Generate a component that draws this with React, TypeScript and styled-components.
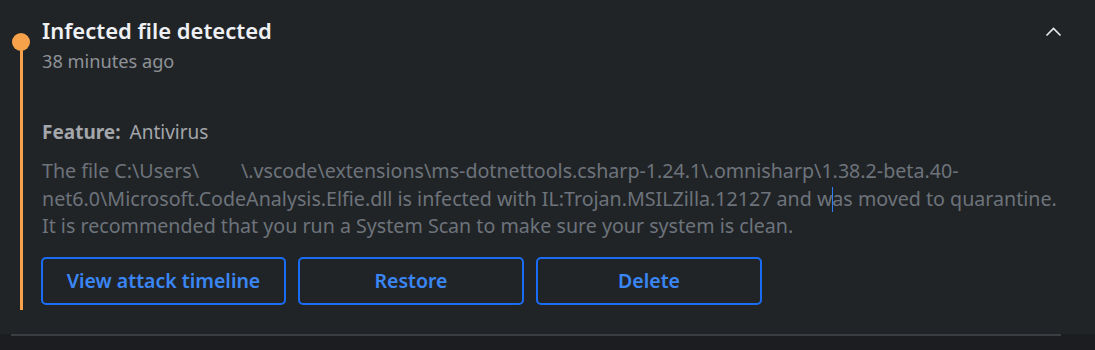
import styled, { createGlobalStyle } from "styled-components";

const GlobalStyle = createGlobalStyle`
    body {
        margin: 0;
        background: #1b1d20;
        font-family: "Noto Sans", "Open Sans", sans-serif;
    }
`;

const Page = styled.div`
    width: 1095px;
    height: 350px;
    background: #1b1d20;
`;

const Card = styled.div`
    display: flex;
    height: 334px;
    background: #212427;
    box-sizing: border-box;
    padding-right: 34px;
`;

const Rail = styled.div`
    width: 40px;
    margin-left: 1px;
    padding-top: 33px;
    display: flex;
    flex-direction: column;
    align-items: center;
`;

const Dot = styled.div`
    width: 18px;
    height: 18px;
    border-radius: 50%;
    background: #f5a24b;
    flex-shrink: 0;
`;

const RailLine = styled.div`
    width: 3px;
    height: 260px;
    margin-top: -1px;
    background: #f5a24b;
`;

const Content = styled.div`
    flex: 1;
    padding-top: 15px;
    padding-left: 1px;
`;

const Header = styled.div`
    display: flex;
    justify-content: space-between;
    align-items: flex-start;
`;

const Title = styled.div`
    font-size: 22px;
    font-weight: 600;
    line-height: 30px;
    color: #eef0f3;
`;

const Subtitle = styled.div`
    font-size: 18.2px;
    line-height: 24px;
    color: #8f9297;
    margin-top: 4px;
`;

const Chevron = styled.svg`
    margin-top: 12px;
    margin-right: -1px;
`;

const Feature = styled.div`
    margin-top: 46px;
    font-size: 19px;
    line-height: 26px;
    color: #a3a6aa;
    b {
        font-weight: 700;
        margin-right: 9px;
    }
`;

const Body = styled.div`
    margin-top: 12px;
    font-size: 19.65px;
    line-height: 27.5px;
    color: #6d737b;
    span.line {
        display: block;
        white-space: nowrap;
    }
`;

const Redacted = styled.span`
    display: inline-block;
    width: 42px;
`;

const Caret = styled.span`
    display: inline-block;
    width: 1px;
    height: 25px;
    margin: 0 -1px 0 0;
    background: #2f7cf6;
    vertical-align: -6px;
`;

const Actions = styled.div`
    display: flex;
    gap: 12px;
    margin-top: 17px;
    margin-left: -1px;
`;

const Button = styled.button<{ $wide?: boolean }>`
    width: ${(p) => (p.$wide ? "245px" : "226px")};
    height: 48px;
    padding: 0;
    background: transparent;
    border: 2px solid #1a6cf2;
    border-radius: 5px;
    color: #3a86f4;
    font-family: "Noto Sans", "Open Sans", sans-serif;
    font-size: 19.5px;
    font-weight: 600;
    cursor: pointer;
`;

const Divider = styled.div`
    height: 2px;
    margin-left: 11px;
    width: 1050px;
    background: #3a3d41;
`;

export default function App() {
    return (
        <Page>
            <GlobalStyle />
            <Card>
                <Rail>
                    <Dot />
                    <RailLine />
                </Rail>
                <Content>
                    <Header>
                        <div>
                            <Title>Infected file detected</Title>
                            <Subtitle>38 minutes ago</Subtitle>
                        </div>
                        <Chevron width="17" height="10" viewBox="0 0 17 10">
                            <path
                                d="M1.5 8.5 L8.5 1.5 L15.5 8.5"
                                fill="none"
                                stroke="#e8eaed"
                                strokeWidth="1.6"
                            />
                        </Chevron>
                    </Header>
                    <Feature>
                        <b>Feature:</b>Antivirus
                    </Feature>
                    <Body>
                        <span className="line">
                            The file C:\Users\<Redacted />
                            \.vscode\extensions\ms-dotnettools.csharp-1.24.1\.omnisharp\1.38.2-beta.40-
                        </span>
                        <span className="line">
                            net6.0\Microsoft.CodeAnalysis.Elfie.dll is infected with
                            IL:Trojan.MSILZilla.12127 and w<Caret />as moved to quarantine.
                        </span>
                        <span className="line">
                            It is recommended that you run a System Scan to make sure your
                            system is clean.
                        </span>
                    </Body>
                    <Actions>
                        <Button $wide>View attack timeline</Button>
                        <Button>Restore</Button>
                        <Button>Delete</Button>
                    </Actions>
                </Content>
            </Card>
            <Divider />
        </Page>
    );
}
